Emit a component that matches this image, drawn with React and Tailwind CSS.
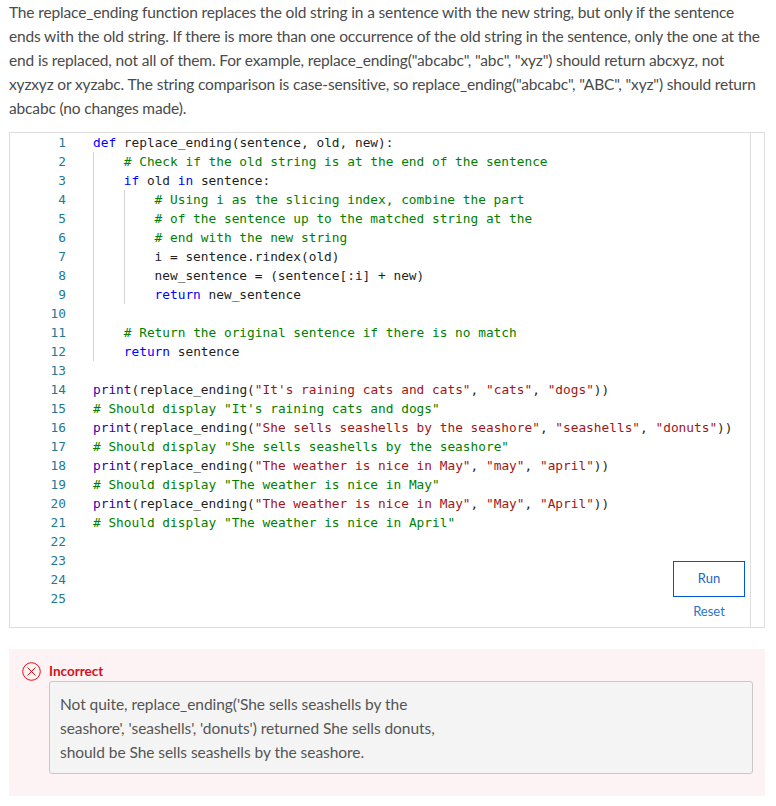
const K = "text-[#0000ff]";
const C = "text-[#008000]";
const S = "text-[#a31515]";
const P = "text-[#3300aa]";
const D = "text-[#1f1f1f]";

// indent = number of guide lines, tokens = [colour, text]
const LINES = [
  [0, [[K, "def"], [D, " replace_ending(sentence, old, new):"]]],
  [1, [[C, "# Check if the old string is at the end of the sentence"]]],
  [1, [[K, "if"], [D, " old "], [K, "in"], [D, " sentence:"]]],
  [2, [[C, "# Using i as the slicing index, combine the part"]]],
  [2, [[C, "# of the sentence up to the matched string at the"]]],
  [2, [[C, "# end with the new string"]]],
  [2, [[D, "i = sentence.rindex(old)"]]],
  [2, [[D, "new_sentence = (sentence[:i] + new)"]]],
  [2, [[K, "return"], [D, " new_sentence"]]],
  [1, []],
  [1, [[C, "# Return the original sentence if there is no match"]]],
  [1, [[K, "return"], [D, " sentence"]]],
  [0, []],
  [0, [[P, "print"], [D, "(replace_ending("], [S, "\"It's raining cats and cats\""], [D, ", "], [S, "\"cats\""], [D, ", "], [S, "\"dogs\""], [D, "))"]]],
  [0, [[C, "# Should display \"It's raining cats and dogs\""]]],
  [0, [[P, "print"], [D, "(replace_ending("], [S, "\"She sells seashells by the seashore\""], [D, ", "], [S, "\"seashells\""], [D, ", "], [S, "\"donuts\""], [D, "))"]]],
  [0, [[C, "# Should display \"She sells seashells by the seashore\""]]],
  [0, [[P, "print"], [D, "(replace_ending("], [S, "\"The weather is nice in May\""], [D, ", "], [S, "\"may\""], [D, ", "], [S, "\"april\""], [D, "))"]]],
  [0, [[C, "# Should display \"The weather is nice in May\""]]],
  [0, [[P, "print"], [D, "(replace_ending("], [S, "\"The weather is nice in May\""], [D, ", "], [S, "\"May\""], [D, ", "], [S, "\"April\""], [D, "))"]]],
  [0, [[C, "# Should display \"The weather is nice in April\""]]],
  [0, []],
  [0, []],
  [0, []],
  [0, []],
];

function CodeLine({ indent, tokens }) {
  const guides = [];
  for (let i = 0; i < indent; i++) {
    guides.push(<span key={i} className="w-[30.8px] shrink-0 border-l border-[#d3d3d3]" />);
  }
  return (
    <div className="flex h-[19px] leading-[19px]">
      {guides}
      <span className="whitespace-pre">
        {tokens.map(([color, text], i) => (
          <span key={i} className={color}>{text}</span>
        ))}
      </span>
    </div>
  );
}

export default function App() {
  return (
    <div className="bg-white min-h-[806px] pl-[9px] pr-[11px] text-[15.5px] tracking-[-0.15px] font-['Lato','Open_Sans',sans-serif] text-[#4a4a4a]">
      <p className="leading-[24px] whitespace-nowrap">
        The replace_ending function replaces the old string in a sentence with the new string, but only if the sentence<br />
        ends with the old string. If there is more than one occurrence of the old string in the sentence, only the one at the<br />
        end is replaced, not all of them. For example, replace_ending("abcabc", "abc", "xyz") should return abcxyz, not<br />
        xyzxyz or xyzabc. The string comparison is case-sensitive, so replace_ending("abcabc", "ABC", "xyz") should return<br />
        abcabc (no changes made).
      </p>

      <div className="mt-[12px] h-[496px] border border-[#dddddd] flex tracking-normal font-['DejaVu_Sans_Mono','Liberation_Mono',monospace] text-[12.8px]">
        <div className="w-[56px] text-right text-[#237893] shrink-0">
          {LINES.map((_, i) => (
            <div key={i} className="h-[19px] leading-[19px]">{i + 1}</div>
          ))}
        </div>
        <div className="relative flex-1 pl-[27px]">
          {LINES.map(([indent, tokens], i) => (
            <CodeLine key={i} indent={indent} tokens={tokens} />
          ))}
          <div className="absolute right-[5px] top-[428px] flex flex-col items-center font-['Lato','Open_Sans',sans-serif] text-[13px]">
            <button className="w-[72px] h-[36px] border border-[#0056d2] text-[#1a66c2]">Run</button>
            <button className="mt-[5px] h-[18px] leading-[18px] text-[#2a73cc]">Reset</button>
          </div>
        </div>
        <div className="w-[14px] shrink-0 border-l border-[#dddddd]" />
      </div>

      <div className="mt-[21px] h-[147px] bg-[#fdf2f4] pl-[13px] pr-[12px] pt-[13px]">
        <div className="flex items-center h-[19px]">
          <svg width="19" height="19" viewBox="0 0 19 19" fill="none" stroke="#e01010" strokeWidth="1">
            <circle cx="9.5" cy="9.5" r="8.8" />
            <path d="M5.5 5.5l8 8M13.5 5.5l-8 8" />
          </svg>
          <span className="ml-[8px] text-[13.5px] tracking-normal font-bold text-[#d4101c]">Incorrect</span>
        </div>
        <div className="ml-[27px] h-[93px] rounded-[3px] border border-[#c8c8c8] bg-[#f4f4f4] px-[10px] py-[10px] leading-[24px] tracking-[-0.05px] whitespace-nowrap text-[#555555]">
          Not quite, replace_ending('She sells seashells by the<br />
          seashore', 'seashells', 'donuts') returned She sells donuts,<br />
          should be She sells seashells by the seashore.
        </div>
      </div>
    </div>
  );
}
